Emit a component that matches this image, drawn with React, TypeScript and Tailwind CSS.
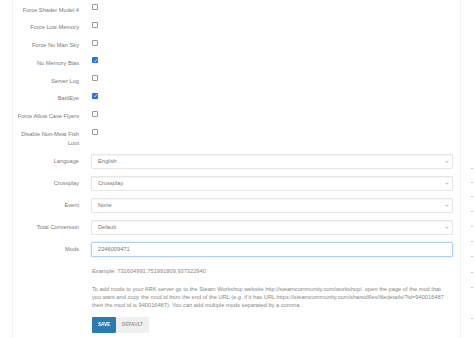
import React from "react";

const checks: [string, boolean][] = [
  ["Force Shader Model 4", false],
  ["Force Low Memory", false],
  ["Force No Man Sky", false],
  ["No Memory Bias", true],
  ["Server Log", false],
  ["BattlEye", true],
  ["Force Allow Cave Flyers", false],
  ["Disable Non-Meat Fish Loot", false],
];

const selects: [string, string][] = [
  ["Language", "English"],
  ["Crossplay", "Crossplay"],
  ["Event", "None"],
  ["Total Conversion", "Default"],
];

function Box({ on }: { on: boolean }) {
  if (on)
    return (
      <div className="w-[6px] h-[6px] rounded-[1px] bg-[#2271e6] flex items-center justify-center">
        <svg width="5" height="5" viewBox="0 0 10 10">
          <path d="M2 5.5 L4 7.5 L8 2.5" stroke="white" strokeWidth="1.6" fill="none" />
        </svg>
      </div>
    );
  return <div className="w-[6px] h-[6px] rounded-[1px] border border-[#9a9a9a] bg-white" />;
}

function Chevron() {
  return (
    <svg width="4" height="3" viewBox="0 0 8 5">
      <path d="M1 1 L4 4 L7 1" stroke="#777" strokeWidth="1.2" fill="none" />
    </svg>
  );
}

export default function App() {
  const dots = [168, 182, 196, 211, 226, 241, 256, 272, 287, 318];
  return (
    <div
      className="relative w-[474px] h-[338px] bg-white overflow-hidden text-[#777]"
      style={{ fontFamily: '"Liberation Sans", Arial, sans-serif' }}
    >
      <div className="ml-[12px] w-[449px] h-[338px] border-x border-[#f3f3f3]">
        <div className="flex flex-col">
          {checks.map(([label, on]) => (
            <div key={label} className="flex items-start h-[17.8px]">
              <div className="w-[66px] text-right text-[5.7px] leading-[9px] mt-[5.5px] text-[#7a7a7a]">
                {label === "Disable Non-Meat Fish Loot" ? (
                  <>
                    Disable Non-Meat Fish
                    <br />
                    Loot
                  </>
                ) : (
                  label
                )}
              </div>
              <div className="ml-[13px] mt-[4px]">
                <Box on={on} />
              </div>
            </div>
          ))}
        </div>
        <div className="flex flex-col gap-[7px] pt-[11.6px]">
          {selects.map(([label, value]) => (
            <div key={label} className="flex items-center h-[15px]">
              <div className="w-[66px] text-right text-[5.7px] text-[#7a7a7a]">{label}</div>
              <div className="ml-[12px] w-[362px] h-[15px] border border-[#e6e6e6] rounded-[1px] shadow-[inset_0_1px_1px_rgba(0,0,0,0.04)] flex items-center justify-between pl-[6px] pr-[3px]">
                <span className="text-[5.7px] text-[#777]">{value}</span>
                <Chevron />
              </div>
            </div>
          ))}
          <div className="flex items-center h-[15px]">
            <div className="w-[66px] text-right text-[5.7px] text-[#7a7a7a]">Mods</div>
            <div className="ml-[12px] w-[362px] h-[15px] border border-[#b3cfee] rounded-[1px] shadow-[0_0_2px_rgba(102,175,233,0.45)] flex items-center pl-[6px]">
              <span className="text-[5.7px] text-[#777]">2246009471</span>
            </div>
          </div>
        </div>
        <div className="ml-[78px] pl-[1px] pt-[10px] text-[5.7px] text-[#888] leading-[8px]">
          <div className="whitespace-nowrap">Example: 731604991,751991809,937322940</div>
          <div className="whitespace-nowrap mt-[10px]">
            To add mods to your ARK server go to the Steam Workshop website http://steamcommunity.com/workshop/, open the page of the mod that
            <br />
            you want and copy the mod id from the end of the URL (e.g. if it has URL https://steamcommunity.com/sharedfiles/filedetails/?id=940016487
            <br />
            then the mod id is 940016487). You can add multiple mods separated by a comma.
          </div>
          <div className="flex mt-[8px]">
            <div className="w-[24px] h-[16px] bg-[#2b7ab1] rounded-[1px] flex items-center justify-center text-white font-bold text-[4.6px]">
              SAVE
            </div>
            <div className="w-[33px] h-[16px] bg-[#f0f0f0] flex items-center justify-center text-[#999] font-bold text-[4.6px]">
              DEFAULT
            </div>
          </div>
        </div>
      </div>
      {dots.map((y) => (
        <div key={y} className="absolute left-[471px] w-[2px] h-[1px] bg-[#c4c4c4]" style={{ top: y }} />
      ))}
    </div>
  );
}
